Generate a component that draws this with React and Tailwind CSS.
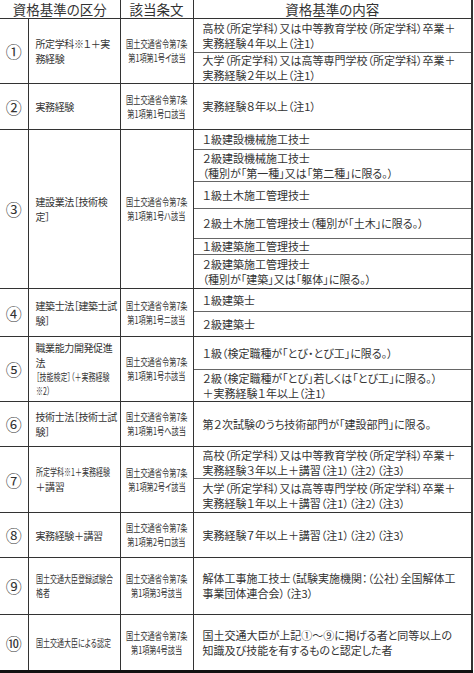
import React from "react";

const ART = (go) => ["国土交通省令第7条", go];

const rows = [
  {
    no: "①",
    cat: [{ t: "所定学科※１＋実" }, { t: "務経験" }],
    art: ART("第1項第1号イ該当"),
    subs: [
      { h: "h-[34px]", lines: ["高校（所定学科）又は中等教育学校（所定学科）卒業＋", "実務経験４年以上（注1）"] },
      { h: "h-[30px]", lines: ["大学（所定学科）又は高等専門学校（所定学科）卒業＋", "実務経験２年以上（注1）"] },
    ],
  },
  {
    no: "②",
    cat: [{ t: "実務経験" }],
    art: ART("第1項第1号ロ該当"),
    subs: [{ h: "h-[46px]", lines: ["実務経験８年以上（注1）"] }],
  },
  {
    no: "③",
    cat: [{ t: "建設業法［技術検" }, { t: "定］" }],
    art: ART("第1項第1号ハ該当"),
    subs: [
      { h: "h-[20px]", lines: ["１級建設機械施工技士"] },
      { h: "h-[32px]", lines: ["２級建設機械施工技士", "（種別が「第一種」又は「第二種」に限る。）"] },
      { h: "h-[27px]", lines: ["１級土木施工管理技士"] },
      { h: "h-[30px]", lines: ["２級土木施工管理技士（種別が「土木」に限る。）"] },
      { h: "h-[16px]", lines: ["１級建築施工管理技士"] },
      { h: "h-[34px]", lines: ["２級建築施工管理技士", "（種別が「建築」又は「躯体」に限る。）"] },
    ],
  },
  {
    no: "④",
    cat: [{ t: "建築士法［建築士試" }, { t: "験］" }],
    art: ART("第1項第1号ニ該当"),
    subs: [
      { h: "h-[23px]", lines: ["１級建築士"] },
      { h: "h-[25px]", lines: ["２級建築士"] },
    ],
  },
  {
    no: "⑤",
    cat: [{ t: "職業能力開発促進" }, { t: "法" }, { t: "［技能検定］（＋実務経験", s: true }, { t: "※2）", s: true }],
    art: ART("第1項第1号ホ該当"),
    subs: [
      { h: "h-[33px]", lines: ["１級（検定職種が「とび・とび工」に限る。）"] },
      { h: "h-[32px]", lines: ["２級（検定職種が「とび」若しくは「とび工」に限る。）", "＋実務経験１年以上（注1）"] },
    ],
  },
  {
    no: "⑥",
    cat: [{ t: "技術士法［技術士試" }, { t: "験］" }],
    art: ART("第1項第1号ヘ該当"),
    subs: [{ h: "h-[45px]", lines: ["第２次試験のうち技術部門が「建設部門」に限る。"] }],
  },
  {
    no: "⑦",
    cat: [{ t: "所定学科※1＋実務経験", s: true }, { t: "＋講習" }],
    art: ART("第1項第2号イ該当"),
    subs: [
      { h: "h-[32px]", lines: ["高校（所定学科）又は中等教育学校（所定学科）卒業＋", "実務経験３年以上＋講習（注1）（注2）（注3）"] },
      { h: "h-[34px]", lines: ["大学（所定学科）又は高等専門学校（所定学科）卒業＋", "実務経験１年以上＋講習（注1）（注2）（注3）"] },
    ],
  },
  {
    no: "⑧",
    cat: [{ t: "実務経験＋講習" }],
    art: ART("第1項第2号ロ該当"),
    subs: [{ h: "h-[45px]", lines: ["実務経験７年以上＋講習（注1）（注2）（注3）"] }],
  },
  {
    no: "⑨",
    cat: [{ t: "国土交通大臣登録試験合", s: true }, { t: "格者", s: true }],
    art: ART("第1項第3号該当"),
    subs: [{ h: "h-[57px]", lines: ["解体工事施工技士（試験実施機関：（公社）全国解体工", "事業団体連合会）（注3）"] }],
  },
  {
    no: "⑩",
    cat: [{ t: "国土交通大臣による認定", s: true }],
    art: ART("第1項第4号該当"),
    subs: [{ h: "h-[57px]", lines: ["国土交通大臣が上記①～⑨に掲げる者と同等以上の", "知識及び技能を有するものと認定した者"] }],
    last: true,
  },
];

function Squeezed({ children, cls }) {
  return (
    <span className={`inline-block whitespace-nowrap text-[10px] leading-[14px] ${cls}`}>
      {children}
    </span>
  );
}

export default function App() {
  return (
    <div className="min-h-screen bg-white font-['Noto_Sans_CJK_JP','Noto_Sans_CJK_SC',sans-serif] text-[#333] [font-feature-settings:'palt']">
      <table className="table-fixed border-collapse w-[472px]">
        <colgroup>
          <col className="w-[28px]" />
          <col className="w-[92px]" />
          <col className="w-[73px]" />
          <col className="w-[279px]" />
        </colgroup>
        <thead>
          <tr>
            <th colSpan={2} className="h-[18px] p-0 text-center text-[13.5px] font-normal leading-[18px] border-b-[1.5px] border-r-[1.5px] border-[#333]">
              資格基準の区分
            </th>
            <th className="h-[18px] p-0 text-center text-[13.5px] font-normal leading-[18px] border-b-[1.5px] border-r-[1.5px] border-[#333]">
              該当条文
            </th>
            <th className="h-[18px] p-0 text-center text-[13.5px] font-normal leading-[18px] border-b-[1.5px] border-r-[2px] border-[#333]">
              資格基準の内容
            </th>
          </tr>
        </thead>
        <tbody>
          {rows.map((r) =>
            r.subs.map((s, i) => {
              const lastSub = i === r.subs.length - 1;
              const bottom = r.last
                ? "border-b-[3px] border-b-[#111]"
                : lastSub
                ? "border-b-[1.5px] border-b-[#333]"
                : "border-b border-b-[#666]";
              const n = r.subs.length;
              const spanBottom = r.last ? "border-b-[3px] border-b-[#111]" : "border-b-[1.5px] border-b-[#333]";
              return (
                <tr key={r.no + i}>
                  {i === 0 && (
                    <>
                      <td rowSpan={n} className={`p-0 text-center align-middle text-[16px] border-r-[1.5px] border-r-[#333] ${spanBottom}`}>
                        {r.no}
                      </td>
                      <td rowSpan={n} className={`pl-[7px] pr-0 align-middle text-[10px] leading-[15px] tracking-[-0.4px] border-r-[1.5px] border-r-[#333] ${spanBottom}`}>
                        <div className="flex flex-col items-start">
                          {r.cat.map((c, k) =>
                            c.s ? (
                              <Squeezed key={k} cls="tracking-normal scale-x-[0.7] origin-left">
                                {c.t}
                              </Squeezed>
                            ) : (
                              <span key={k} className="whitespace-nowrap">
                                {c.t}
                              </span>
                            )
                          )}
                        </div>
                      </td>
                      <td rowSpan={n} className={`p-0 align-middle border-r-[1.5px] border-r-[#333] ${spanBottom}`}>
                        <div className="flex flex-col items-center">
                          {r.art.map((a, k) => (
                            <Squeezed key={k} cls="scale-x-[0.72] origin-center">
                              {a}
                            </Squeezed>
                          ))}
                        </div>
                      </td>
                    </>
                  )}
                  <td className={`${s.h} pl-[9px] pr-0 py-0 align-middle text-[11px] leading-[15px] border-r-[2px] border-r-[#333] ${bottom}`}>
                    {s.lines.map((l, k) => (
                      <div key={k} className="whitespace-nowrap">
                        {l}
                      </div>
                    ))}
                  </td>
                </tr>
              );
            })
          )}
        </tbody>
      </table>
    </div>
  );
}
